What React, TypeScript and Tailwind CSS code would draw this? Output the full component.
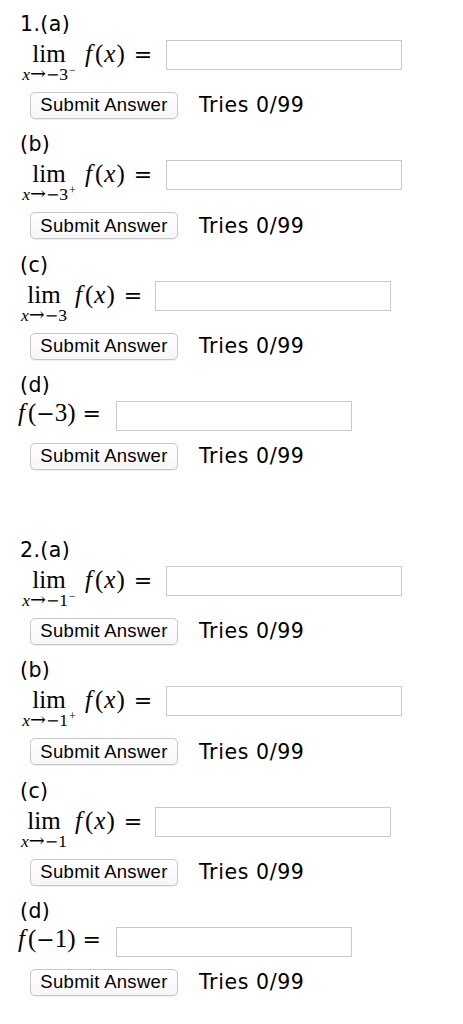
import React from 'react'

type Part = {
  label: string
  kind: 'lim' | 'val'
  to: string
  side?: string
}

const sections: Part[][] = [
  [
    { label: '1.(a)', kind: 'lim', to: '3', side: '−' },
    { label: '(b)', kind: 'lim', to: '3', side: '+' },
    { label: '(c)', kind: 'lim', to: '3' },
    { label: '(d)', kind: 'val', to: '3' },
  ],
  [
    { label: '2.(a)', kind: 'lim', to: '1', side: '−' },
    { label: '(b)', kind: 'lim', to: '1', side: '+' },
    { label: '(c)', kind: 'lim', to: '1' },
    { label: '(d)', kind: 'val', to: '1' },
  ],
]

const Answer = () => (
  <input
    type='text'
    className='h-[30px] w-[236px] shrink-0 border border-[#c9c9c9] bg-white outline-none'
  />
)

const Submit = () => (
  <div className='ml-[10px] flex h-[27px] items-center'>
    <button className="flex h-[27px] w-[148px] items-center justify-center rounded-[5px] border border-[#c6c6c6] bg-gradient-to-b from-white to-[#f6f6f6] font-['Liberation_Sans',Arial,sans-serif] text-[18.5px] tracking-[0.3px] text-black shadow-[0_1px_0_rgba(0,0,0,0.06)]">
      Submit Answer
    </button>
    <span className='ml-[21px] leading-[24px] tracking-[0.6px]'>Tries 0/99</span>
  </div>
)

// wide DejaVu glyphs stand in for the MathJax relation/operator symbols
const Sym = ({ c, size }: { c: string; size: string }) => (
  <span className={`font-['DejaVu_Serif',serif] ${size}`}>{c}</span>
)

const LimitRow = ({ to, side }: { to: string; side?: string }) => (
  <div className='mt-[4px] flex h-[52px] items-start'>
    <div className={`flex shrink-0 items-start font-['Liberation_Serif','Times_New_Roman',serif] ${side ? 'w-[146px]' : 'w-[135px]'}`}>
      <div className={`-ml-[1px] mt-[3px] flex flex-col items-center ${side ? 'w-[60px]' : 'w-[50px]'}`}>
        <span className='text-[25px] leading-[22px]'>lim</span>
        <span className='mt-[1px] whitespace-nowrap text-[17.5px] leading-[14px]'>
          <i>x</i>
          <span className="font-['DejaVu_Serif',serif] text-[19px]">→</span>
          <span className="font-['DejaVu_Serif',serif] text-[16px]">−</span>
          {to}
          {side && <span className='relative -top-[6px] ml-[1px] text-[12px]'>{side}</span>}
        </span>
      </div>
      <span className='ml-[6px] whitespace-nowrap text-[25px] leading-[28px]'>
        <i className='mr-[3px]'>f</i>(<i className='mx-[1px]'>x</i>)
        <span className='ml-[9px]'>
          <Sym c='=' size='text-[22px]' />
        </span>
      </span>
    </div>
    <Answer />
  </div>
)

const ValueRow = ({ to }: { to: string }) => (
  <div className='mt-[4px] flex h-[41.5px] items-start'>
    <div className="-mt-[2px] w-[96px] shrink-0 whitespace-nowrap font-['Liberation_Serif','Times_New_Roman',serif] text-[25px] leading-[28px]">
      <i className='-ml-[2px] mr-[3px]'>f</i>(
      <Sym c='−' size='text-[22px]' />
      {to})
      <span className='ml-[7px]'>
        <Sym c='=' size='text-[22px]' />
      </span>
    </div>
    <Answer />
  </div>
)

export default function App() {
  return (
    <div className="min-h-screen bg-white pl-[20px] pt-[11.5px] font-['DejaVu_Sans',Verdana,sans-serif] text-[20.5px] text-black">
      {sections.map((parts, i) => (
        <div key={i} className={i === 0 ? 'mb-[68px]' : ''}>
          {parts.map((p, j) => (
            <div key={j} className={p.kind === 'lim' ? 'pb-[13.5px]' : ''}>
              <div className='h-[24px] leading-[24px] tracking-[0.4px]'>{p.label}</div>
              {p.kind === 'lim' ? <LimitRow to={p.to} side={p.side} /> : <ValueRow to={p.to} />}
              <Submit />
            </div>
          ))}
        </div>
      ))}
    </div>
  )
}
